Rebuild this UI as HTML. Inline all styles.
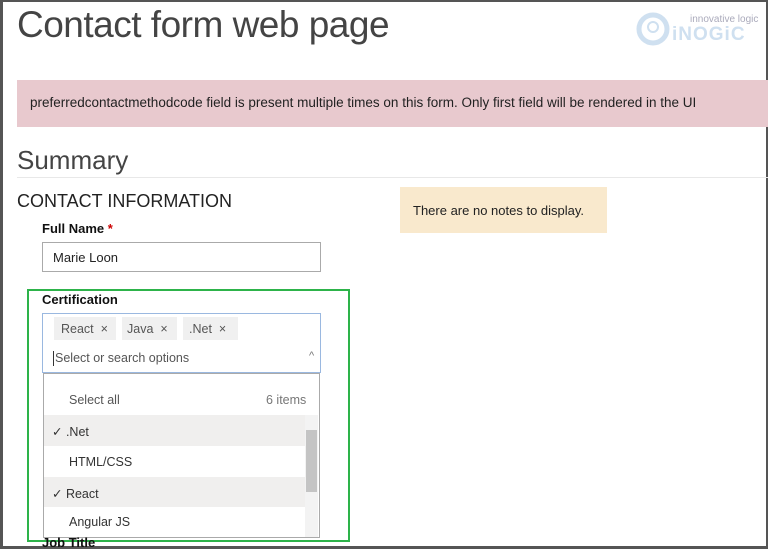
<!DOCTYPE html>
<html><head><style>
*{margin:0;padding:0;box-sizing:border-box}
body{width:768px;height:549px;overflow:hidden;background:#fff;font-family:"Liberation Sans",sans-serif;position:relative;color:#222}
.a{position:absolute}
.lbl{font-weight:bold;font-size:13px;color:#111}
.dd{font-size:12.5px;color:#333}
</style></head><body>
<div class="a" style="left:0;top:0;width:768px;height:2px;background:#555"></div>
<div class="a" style="left:0;top:0;width:3px;height:549px;background:#555"></div>
<div class="a" style="left:766px;top:0;width:2px;height:549px;background:#555"></div>
<div class="a" style="left:0;top:546px;width:768px;height:3px;background:#555"></div>
<div class="a" style="left:17px;top:4px;font-size:37px;color:#444;letter-spacing:-0.5px">Contact form web page</div>
<svg class="a" style="left:636px;top:12px" width="36" height="34"><circle cx="17" cy="17" r="14" fill="none" stroke="#cfe0f0" stroke-width="5"/><circle cx="17" cy="15" r="5" fill="none" stroke="#cfe0f0" stroke-width="2"/></svg>
<div class="a" style="left:690px;top:14px;font-size:10px;color:#aab">innovative logic</div>
<div class="a" style="left:672px;top:24px;font-size:19px;color:#cfe0f0;font-weight:bold;letter-spacing:1px">iNOGiC</div>
<div class="a" style="left:17px;top:80px;width:751px;height:47px;background:#e8c9ce"></div>
<div class="a" style="left:30px;top:95px;font-size:13.5px;color:#222">preferredcontactmethodcode field is present multiple times on this form. Only first field will be rendered in the UI</div>
<div class="a" style="left:17px;top:145px;font-size:26px;color:#444">Summary</div>
<div class="a" style="left:17px;top:177px;width:751px;height:1px;background:#e8e8e8"></div>
<div class="a" style="left:17px;top:191px;font-size:18px;color:#222">CONTACT INFORMATION</div>
<div class="a" style="left:400px;top:187px;width:207px;height:46px;background:#f9e9cd"></div>
<div class="a" style="left:413px;top:203px;font-size:13px">There are no notes to display.</div>
<div class="a lbl" style="left:42px;top:221px">Full Name <span style="color:#c00">*</span></div>
<div class="a" style="left:42px;top:242px;width:279px;height:30px;border:1px solid #aaa"></div>
<div class="a" style="left:53px;top:250px;font-size:13px">Marie Loon</div>
<div class="a" style="left:27px;top:289px;width:323px;height:253px;border:2px solid #2db34a"></div>
<div class="a lbl" style="left:42px;top:292px">Certification</div>
<div class="a" style="left:42px;top:313px;width:279px;height:60px;border:1px solid #9ab8e0"></div>
<div class="a dd" style="left:54px;top:317px;width:62px;height:23px;background:#f0f0f0;padding:5px 7px;color:#555">React&nbsp; ×</div>
<div class="a dd" style="left:122px;top:317px;width:55px;height:23px;background:#f0f0f0;padding:5px 5px;color:#555">Java&nbsp; ×</div>
<div class="a dd" style="left:183px;top:317px;width:55px;height:23px;background:#f0f0f0;padding:5px 6px;color:#555">.Net&nbsp; ×</div>
<div class="a dd" style="left:53px;top:351px;color:#555;border-left:1px solid #333;padding-left:1px;line-height:15px">Select or search options</div>
<div class="a" style="left:309px;top:350px;font-size:11px;color:#777">^</div>
<div class="a" style="left:43px;top:373px;width:277px;height:165px;border:1px solid #aaa;background:#fff"></div>
<div class="a dd" style="left:69px;top:393px;color:#555">Select all</div>
<div class="a dd" style="left:266px;top:393px;color:#777">6 items</div>
<div class="a" style="left:44px;top:415px;width:261px;height:31px;background:#f0efee"></div>
<div class="a dd" style="left:52px;top:424px">✓ .Net</div>
<div class="a dd" style="left:69px;top:455px">HTML/CSS</div>
<div class="a" style="left:44px;top:477px;width:261px;height:30px;background:#f0efee"></div>
<div class="a dd" style="left:52px;top:486px">✓ React</div>
<div class="a dd" style="left:69px;top:515px">Angular JS</div>
<div class="a" style="left:305px;top:415px;width:13px;height:122px;background:#f3f3f3"></div>
<div class="a" style="left:306px;top:430px;width:11px;height:62px;background:#c4c4c4"></div>
<div class="a lbl" style="left:42px;top:535px">Job Title</div>
</body></html>
